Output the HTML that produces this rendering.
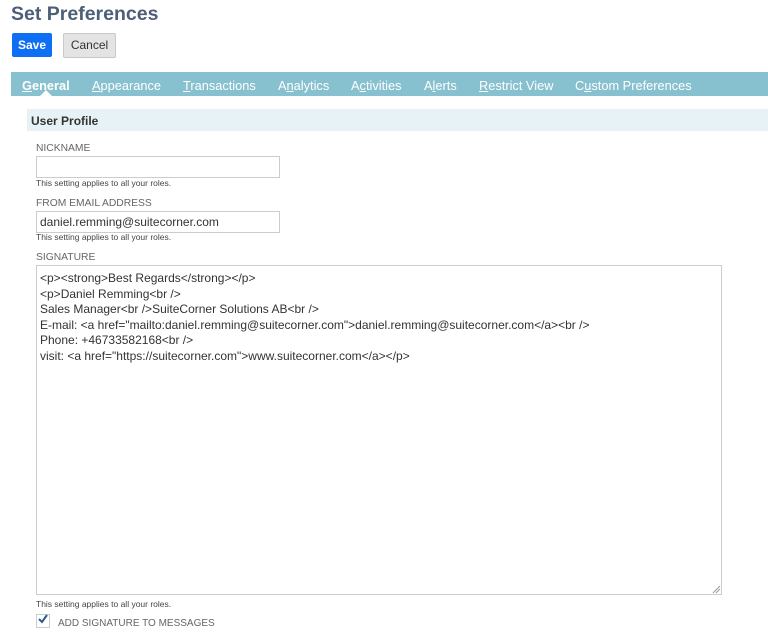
<!DOCTYPE html>
<html><head><style>
body{margin:0;width:768px;height:637px;background:#fff;font-family:"Liberation Sans",sans-serif;position:relative;overflow:hidden}
.a{position:absolute;white-space:nowrap}
.lbl{font-size:10.3px;color:#666;left:36px}
.help{font-size:8.5px;color:#444;left:36px}
.inp{position:absolute;left:36px;width:242px;height:20px;border:1px solid #ccc;background:#fff}
.tab{position:absolute;top:78px;font-size:12.8px;color:#fff}
.sig{font-size:12px;color:#333;left:40px}
</style></head><body>
<div class="a" style="left:11px;top:3px;font-size:19.5px;font-weight:bold;color:#4d5e78">Set Preferences</div>
<div class="a" style="left:12px;top:33px;width:40px;height:24px;background:#0f6ff4;border-radius:2px;color:#fff;font-size:12px;font-weight:bold;text-align:center;line-height:24px">Save</div>
<div class="a" style="left:63px;top:33px;width:51px;height:23px;background:#e4e4e4;border:1px solid #c8c8c8;border-radius:2px;color:#333;font-size:12px;text-align:center;line-height:23px">Cancel</div>
<div class="a" style="left:11px;top:72px;width:757px;height:24px;background:#87c1cf"></div>
<div class="a" style="left:40px;top:90px;width:0;height:0;border-left:6px solid transparent;border-right:6px solid transparent;border-bottom:6px solid #fff"></div>
<div class="tab" style="left:22px;font-weight:bold"><u>G</u>eneral</div>
<div class="tab" style="left:92px"><u>A</u>ppearance</div>
<div class="tab" style="left:183px"><u>T</u>ransactions</div>
<div class="tab" style="left:278px">A<u>n</u>alytics</div>
<div class="tab" style="left:351px">A<u>c</u>tivities</div>
<div class="tab" style="left:424px">A<u>l</u>erts</div>
<div class="tab" style="left:479px"><u>R</u>estrict View</div>
<div class="tab" style="left:575px">C<u>u</u>stom Preferences</div>
<div class="a" style="left:27px;top:109px;width:741px;height:22px;background:#e6f2f5"></div>
<div class="a" style="left:31px;top:114px;font-size:12px;font-weight:bold;color:#333">User Profile</div>
<div class="a lbl" style="top:143px">NICKNAME</div>
<div class="inp" style="top:156px"></div>
<div class="a help" style="top:178px">This setting applies to all your roles.</div>
<div class="a lbl" style="top:198px">FROM EMAIL ADDRESS</div>
<div class="inp" style="top:211px"></div>
<div class="a" style="left:40px;top:215px;font-size:12px;color:#333">daniel.remming@suitecorner.com</div>
<div class="a help" style="top:232px">This setting applies to all your roles.</div>
<div class="a lbl" style="top:252px">SIGNATURE</div>
<div class="a" style="left:36px;top:265px;width:684px;height:328px;border:1px solid #ccc"></div>
<div class="a sig" style="top:271px">&lt;p&gt;&lt;strong&gt;Best Regards&lt;/strong&gt;&lt;/p&gt;</div>
<div class="a sig" style="top:287px">&lt;p&gt;Daniel Remming&lt;br /&gt;</div>
<div class="a sig" style="top:302px">Sales Manager&lt;br /&gt;SuiteCorner Solutions AB&lt;br /&gt;</div>
<div class="a sig" style="top:318px">E-mail: &lt;a href="mailto:daniel.remming@suitecorner.com"&gt;daniel.remming@suitecorner.com&lt;/a&gt;&lt;br /&gt;</div>
<div class="a sig" style="top:333px">Phone: +46733582168&lt;br /&gt;</div>
<div class="a sig" style="top:349px">visit: &lt;a href="https://suitecorner.com"&gt;www.suitecorner.com&lt;/a&gt;&lt;/p&gt;</div>
<svg class="a" style="left:711px;top:584px" width="10" height="10"><path d="M9 2L2 9M9 5L5 9" stroke="#999" stroke-width="1"/></svg>
<div class="a help" style="top:599px">This setting applies to all your roles.</div>
<div class="a" style="left:36px;top:614px;width:12px;height:12px;border:1px solid #ccc"></div>
<svg class="a" style="left:37px;top:613px" width="12" height="12"><path d="M2 6L5 9L10 2" stroke="#2c5a8c" stroke-width="2" fill="none"/></svg>
<div class="a" style="left:58px;top:618px;font-size:10px;color:#666">ADD SIGNATURE TO MESSAGES</div>
</body></html>
